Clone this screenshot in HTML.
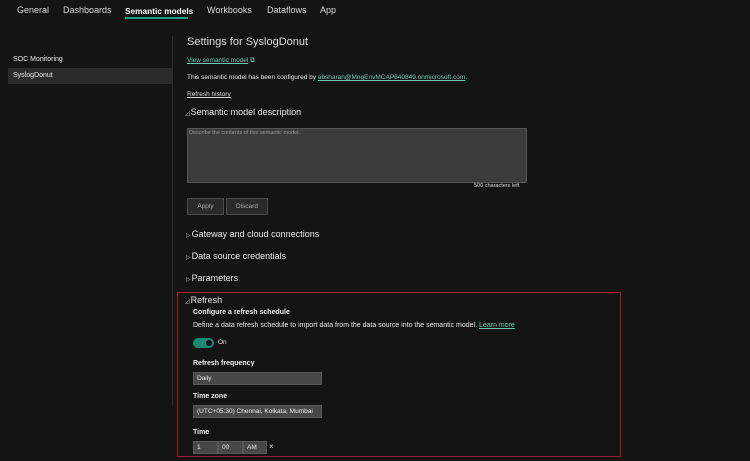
<!DOCTYPE html>
<html><head><style>
*{margin:0;padding:0;box-sizing:border-box}
body{width:750px;height:461px;background:#141414;color:#e6e6e6;font-family:"Liberation Sans",sans-serif;position:relative;overflow:hidden}
.a{position:absolute;white-space:nowrap}
.tab{font-size:9px;top:5px;color:#d8d8d8}
.lk{color:#6cc7ae;text-decoration:underline}
.sm{font-size:6.5px}
.h{font-size:9px;color:#e8e8e8}
.tri{font-size:6px;color:#bbb;margin-right:1px}
.sel{position:absolute;background:#474747;border:1px solid #5a5a5a;font-size:6.5px;color:#eee;padding:2px 3px}
.lab{font-size:7px;font-weight:bold;color:#eee}
</style></head><body>
<div class="a tab" style="left:17px">General</div>
<div class="a tab" style="left:63px">Dashboards</div>
<div class="a tab" style="left:125px;font-weight:bold;color:#fff;font-size:8.3px;top:5.5px">Semantic models</div>
<div class="a" style="left:125px;top:17px;width:63px;height:2px;background:#1aa084"></div>
<div class="a tab" style="left:207px">Workbooks</div>
<div class="a tab" style="left:267px">Dataflows</div>
<div class="a tab" style="left:320px">App</div>
<div class="a" style="left:172px;top:36px;width:1px;height:370px;background:#2a2a2a"></div>
<div class="a sm" style="left:13px;top:56px;font-size:7px">SOC Monitoring</div>
<div class="a" style="left:8px;top:68px;width:164px;height:16px;background:#2b2b2b"></div>
<div class="a sm" style="left:13px;top:72px;font-size:7px">SyslogDonut</div>
<div class="a" style="left:187px;top:36px;font-size:11px;color:#ddd">Settings for SyslogDonut</div>
<div class="a sm" style="left:187px;top:57px"><span class="lk">View semantic model</span> <span style="color:#6cc7ae">⧉</span></div>
<div class="a sm" style="left:187px;top:74px">This semantic model has been configured by <span class="lk">absharan@MngEnvMCAP640849.onmicrosoft.com</span>.</div>
<div class="a sm lk" style="left:187px;top:91px;color:#ddd">Refresh history</div>
<div class="a h" style="left:185px;top:107px"><span class="tri">◿</span>Semantic model description</div>
<div class="a" style="left:187px;top:128px;width:340px;height:55px;background:#3b3b3b;border:1px solid #555"></div>
<div class="a" style="left:189px;top:130px;font-size:5.5px;color:#999">Describe the contents of this semantic model.</div>
<div class="a" style="left:474px;top:183px;font-size:5.5px;color:#ddd">500 characters left</div>
<div class="a" style="left:187px;top:198px;width:37px;height:17px;background:#2a2a2a;border:1px solid #4a4a4a;font-size:6.5px;color:#aaa;text-align:center;line-height:15px">Apply</div>
<div class="a" style="left:226px;top:198px;width:42px;height:17px;background:#2a2a2a;border:1px solid #4a4a4a;font-size:6.5px;color:#aaa;text-align:center;line-height:15px">Discard</div>
<div class="a h" style="left:186px;top:229px"><span class="tri">▷</span>Gateway and cloud connections</div>
<div class="a h" style="left:186px;top:251px"><span class="tri">▷</span>Data source credentials</div>
<div class="a h" style="left:186px;top:273px"><span class="tri">▷</span>Parameters</div>
<div class="a" style="left:177px;top:292px;width:444px;height:165px;border:1px solid #a51d30"></div>
<div class="a h" style="left:185px;top:295px"><span class="tri">◿</span>Refresh</div>
<div class="a lab" style="left:193px;top:309px">Configure a refresh schedule</div>
<div class="a" style="left:193px;top:322px;font-size:7px">Define a data refresh schedule to import data from the data source into the semantic model. <span class="lk">Learn more</span></div>
<div class="a" style="left:193px;top:338px;width:21px;height:10px;border-radius:5px;background:#1b8a72"></div>
<div class="a" style="left:206px;top:340px;width:6px;height:6px;border-radius:3px;background:#111"></div>
<div class="a sm" style="left:218px;top:339px">On</div>
<div class="a lab" style="left:193px;top:360px">Refresh frequency</div>
<div class="sel" style="left:193px;top:372px;width:129px;height:13px">Daily</div>
<div class="a lab" style="left:193px;top:393px">Time zone</div>
<div class="sel" style="left:193px;top:405px;width:129px;height:13px">(UTC+05:30) Chennai, Kolkata, Mumbai</div>
<div class="a lab" style="left:193px;top:429px">Time</div>
<div class="sel" style="left:193px;top:441px;width:25px;height:13px">1</div>
<div class="sel" style="left:218px;top:441px;width:25px;height:13px">00</div>
<div class="sel" style="left:243px;top:441px;width:24px;height:13px">AM</div>
<div class="a" style="left:269px;top:442px;font-size:8px">×</div>
</body></html>
